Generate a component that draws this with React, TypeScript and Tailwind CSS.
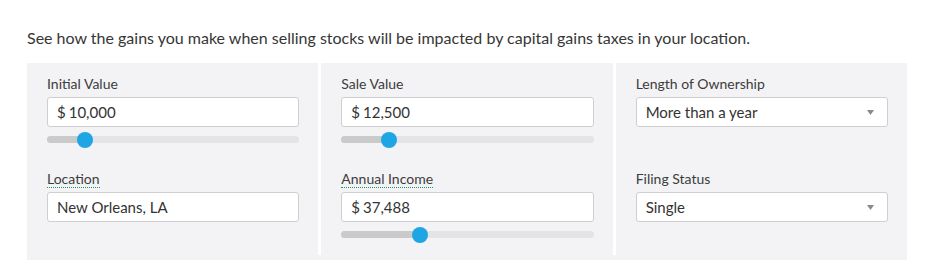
import React from "react";

function Label({ text, dotted }: { text: string; dotted?: boolean }) {
  return (
    <div className="h-[21px] flex items-start">
      <span
        className={
          "text-[14px] leading-[16px] text-[#3c3c3c] " +
          (dotted ? "border-b border-dotted border-[#1a9a6c]" : "")
        }
      >
        {text}
      </span>
    </div>
  );
}

function TextBox({ value, money }: { value: string; money?: boolean }) {
  return (
    <div className="h-[30px] bg-white border border-[#cfcfd2] rounded-[3px] flex items-center px-[9px] text-[15px] text-[#333]">
      {money ? <span className="mr-[3px]">$</span> : null}
      <span>{value}</span>
    </div>
  );
}

function SelectBox({ value }: { value: string }) {
  return (
    <div className="h-[30px] bg-white border border-[#cfcfd2] rounded-[3px] flex items-center justify-between pl-[9px] pr-[13px] text-[15px] text-[#333]">
      <span>{value}</span>
      <svg width="7" height="5" viewBox="0 0 7 5">
        <path d="M0 0 L7 0 L3.5 5 Z" fill="#8a8a8a" />
      </svg>
    </div>
  );
}

function Slider({ pct }: { pct: number }) {
  return (
    <div className="relative h-[7px] mt-[9px] rounded-full bg-[#e4e4e6]">
      <div className="h-full rounded-full bg-[#cacaca]" style={{ width: `${pct}%` }} />
      <div
        className="absolute top-1/2 w-4 h-4 -mt-2 -ml-2 rounded-full bg-[#1ea5e4]"
        style={{ left: `${pct}%` }}
      />
    </div>
  );
}

function Row({ children }: { children: React.ReactNode }) {
  return <div className="h-[95px]">{children}</div>;
}

function Cell({ children }: { children: React.ReactNode }) {
  return <div className="bg-[#f3f3f5] pl-5 pr-[19px] pt-[13px]">{children}</div>;
}

export default function App() {
  return (
    <div
      className="w-[928px] h-[260px] bg-white overflow-hidden"
      style={{ fontFamily: "Lato, 'Open Sans', sans-serif" }}
    >
      <div className="pl-[27px] pt-[28px] text-[16px] leading-[20px] text-[#363636]">
        See how the gains you make when selling stocks will be impacted by capital gains taxes in your location.
      </div>
      <div className="ml-[27px] w-[880px] mt-[15px]">
        <div className="grid grid-cols-3 gap-x-[3px] h-[190px]">
          <Cell>
            <Row>
              <Label text="Initial Value" />
              <TextBox value="10,000" money />
              <Slider pct={15} />
            </Row>
            <Row>
              <Label text="Location" dotted />
              <TextBox value="New Orleans, LA" />
            </Row>
          </Cell>
          <Cell>
            <Row>
              <Label text="Sale Value" />
              <TextBox value="12,500" money />
              <Slider pct={18.7} />
            </Row>
            <Row>
              <Label text="Annual Income" dotted />
              <TextBox value="37,488" money />
              <Slider pct={31} />
            </Row>
          </Cell>
          <Cell>
            <Row>
              <Label text="Length of Ownership" />
              <SelectBox value="More than a year" />
            </Row>
            <Row>
              <Label text="Filing Status" />
              <SelectBox value="Single" />
            </Row>
          </Cell>
        </div>
        <div className="mt-[2px] h-[20px] bg-[#f3f3f5]" />
      </div>
    </div>
  );
}
